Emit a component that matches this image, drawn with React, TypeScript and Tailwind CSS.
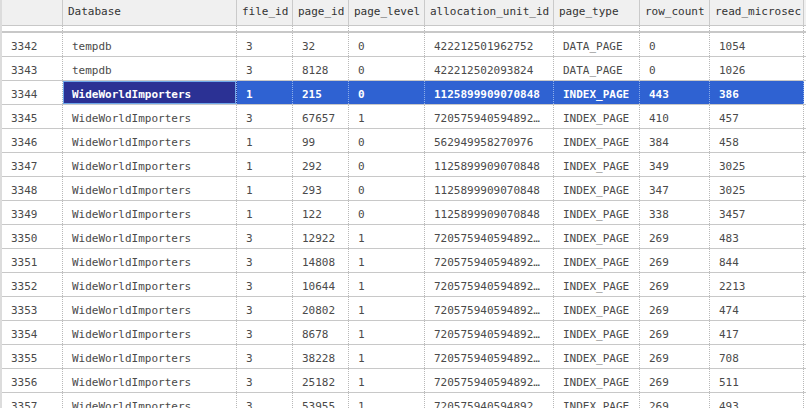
import React from "react";

const W = [
  "w-[61px]",
  "w-[174px]",
  "w-[56px]",
  "w-[56px]",
  "w-[76px]",
  "w-[129px]",
  "w-[86px]",
  "w-[70px]",
  "w-[94px]",
];

const headers = [
  "",
  "Database",
  "file_id",
  "page_id",
  "page_level",
  "allocation_unit_id",
  "page_type",
  "row_count",
  "read_microsec",
];

const T = "720575940594892…";
const WWI = "WideWorldImporters";

const rows: string[][] = [
  ["3341", "tempdb", "3", "40", "0", "422212501897216", "DATA_PAGE", "0", "1120"],
  ["3342", "tempdb", "3", "32", "0", "422212501962752", "DATA_PAGE", "0", "1054"],
  ["3343", "tempdb", "3", "8128", "0", "422212502093824", "DATA_PAGE", "0", "1026"],
  ["3344", WWI, "1", "215", "0", "1125899909070848", "INDEX_PAGE", "443", "386"],
  ["3345", WWI, "3", "67657", "1", T, "INDEX_PAGE", "410", "457"],
  ["3346", WWI, "1", "99", "0", "562949958270976", "INDEX_PAGE", "384", "458"],
  ["3347", WWI, "1", "292", "0", "1125899909070848", "INDEX_PAGE", "349", "3025"],
  ["3348", WWI, "1", "293", "0", "1125899909070848", "INDEX_PAGE", "347", "3025"],
  ["3349", WWI, "1", "122", "0", "1125899909070848", "INDEX_PAGE", "338", "3457"],
  ["3350", WWI, "3", "12922", "1", T, "INDEX_PAGE", "269", "483"],
  ["3351", WWI, "3", "14808", "1", T, "INDEX_PAGE", "269", "844"],
  ["3352", WWI, "3", "10644", "1", T, "INDEX_PAGE", "269", "2213"],
  ["3353", WWI, "3", "20802", "1", T, "INDEX_PAGE", "269", "474"],
  ["3354", WWI, "3", "8678", "1", T, "INDEX_PAGE", "269", "417"],
  ["3355", WWI, "3", "38228", "1", T, "INDEX_PAGE", "269", "708"],
  ["3356", WWI, "3", "25182", "1", T, "INDEX_PAGE", "269", "511"],
  ["3357", WWI, "3", "53955", "1", T, "INDEX_PAGE", "269", "493"],
];

const SELECTED = "3344";

function Row({ cells, first }: { cells: string[]; first: boolean }) {
  const sel = cells[0] === SELECTED;
  return (
    <div
      className={
        first
          ? "flex h-[25px] border-b-2 border-[#c8c8c8]"
          : "flex h-[24px] border-b border-[#c8c8c8]"
      }
    >
      {cells.map((c, i) => {
        let extra = "text-[#4a4a4a] border-[#b8b8b8]";
        if (sel && i === 1)
          extra =
            "bg-[#2b3194] text-white font-bold border-[#8fb0ea] shadow-[inset_0_0_0_1px_#6fa8ea]";
        else if (sel && i > 1)
          extra = "bg-[#2f62d2] text-white font-bold border-[#8fb0ea]";
        return (
          <div
            key={i}
            className={`${W[i]} ${extra} ${
              first ? "pt-0 pb-[1px]" : "pt-[5px]"
            } shrink-0 h-full border-r border-dotted pl-[9px] flex items-center whitespace-nowrap overflow-hidden`}
          >
            {c}
          </div>
        );
      })}
    </div>
  );
}

export default function App() {
  return (
    <div
      className="w-[806px] h-[408px] overflow-hidden bg-white flex flex-col border-l-2 border-[#dcdcdc] text-[11px]"
      style={{ fontFamily: '"DejaVu Sans Mono", monospace' }}
    >
      <div className="flex h-[26px] shrink-0 border-b border-[#c8c8c8] bg-[#f0f0f0]">
        {headers.map((h, i) => (
          <div
            key={i}
            className={`${W[i]} shrink-0 h-full border-r border-[#cacaca] pl-[5px] flex items-center text-[#333333] whitespace-nowrap overflow-hidden`}
          >
            {h}
          </div>
        ))}
      </div>
      <div className="flex-1 overflow-hidden">
        <div className="mt-[-18px]">
          {rows.map((r, idx) => (
            <Row key={r[0]} cells={r} first={idx === 0} />
          ))}
        </div>
      </div>
    </div>
  );
}
